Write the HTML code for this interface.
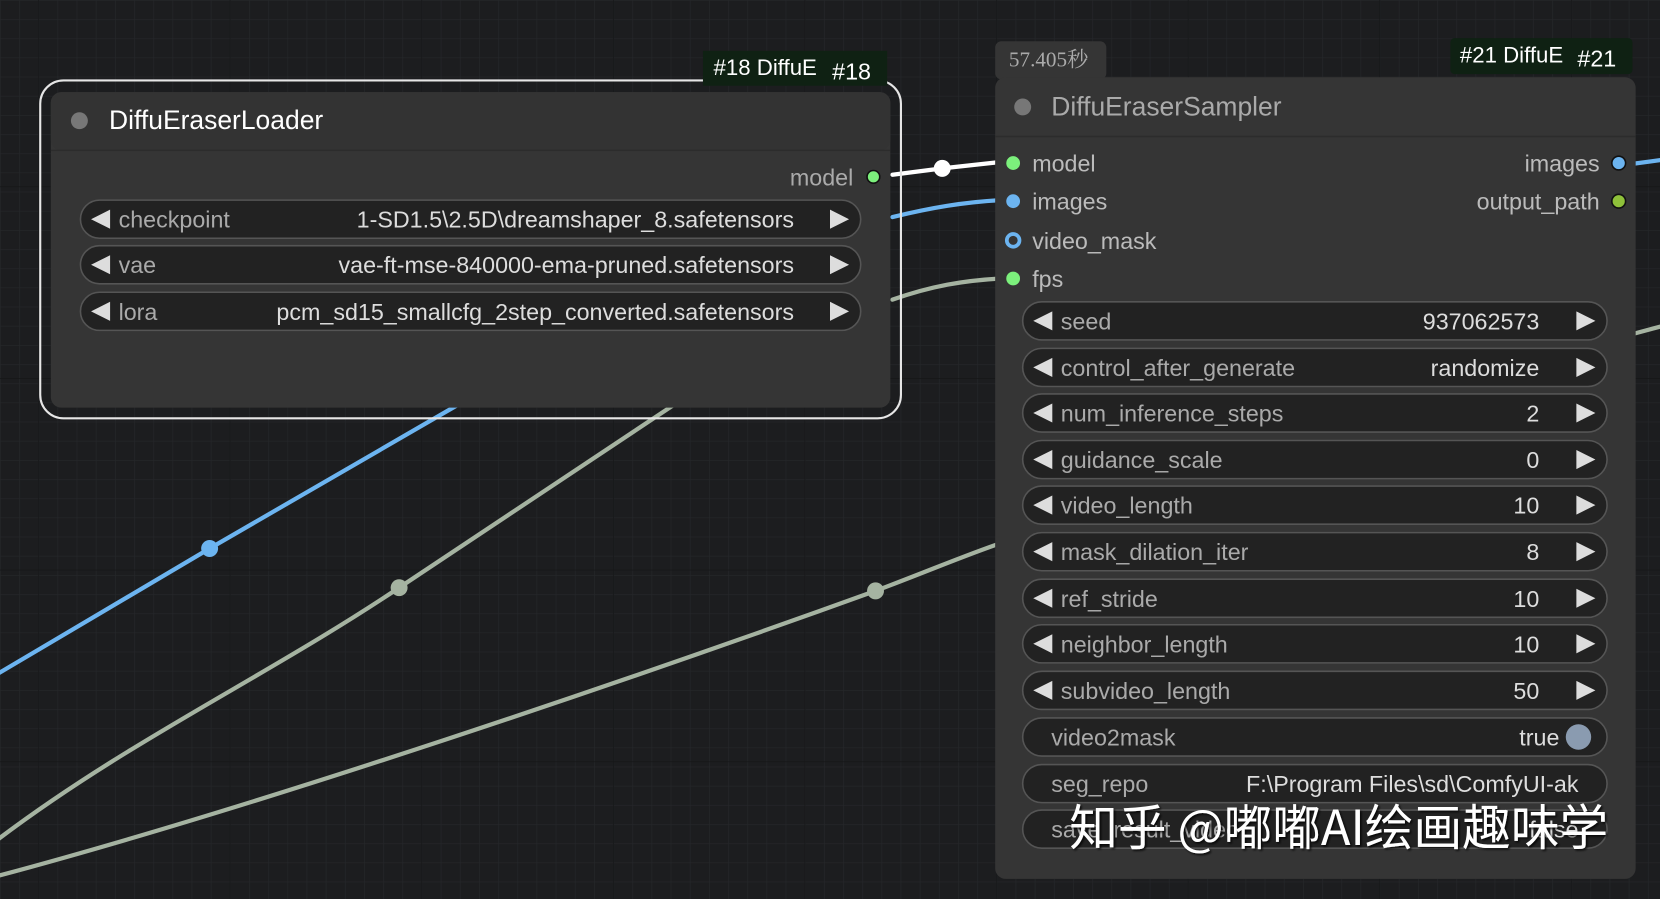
<!DOCTYPE html>
<html><head><meta charset="utf-8"><style>
html,body{margin:0;padding:0;background:#1c1d1f;overflow:hidden}
svg{display:block}
text{font-family:"Liberation Sans","Noto Sans CJK SC",sans-serif}
</style></head><body>
<svg width="1660" height="899" viewBox="0 0 1568 849" preserveAspectRatio="none" xmlns="http://www.w3.org/2000/svg">
<defs>
<pattern id="g" width="18.1" height="18.1" patternUnits="userSpaceOnUse">
<path d="M0 0H18.1M0 0V18.1" stroke="#25272a" stroke-width="1.2" fill="none"/>
</pattern>
<pattern id="G" width="181" height="181" patternUnits="userSpaceOnUse" x="36" y="-5">
<path d="M0 0H181M0 0V181" stroke="#151617" stroke-width="1.4" fill="none"/>
</pattern>
<filter id="sh"><feDropShadow dx="1.5" dy="1.5" stdDeviation="1" flood-color="#000" flood-opacity="0.8"/></filter>
</defs>
<rect width="1568" height="849" fill="#1c1d1f"/>
<rect width="1568" height="849" fill="url(#g)"/>
<rect width="1568" height="849" fill="url(#G)"/>

<g fill="none" stroke-width="4" stroke-linecap="round">
<path d="M-5 638 L198 518 L440 378" stroke="#6cb4f0"/>
<path d="M-5 795 C120 700 250 640 377 555 L640 380" stroke="#a5b3a1"/>
<path d="M-5 828 C250 760 600 640 827 558 C880 538 910 525 945 513" stroke="#a5b3a1"/>
<path d="M843 165 L890 159 L945 153" stroke="#ffffff"/>
<path d="M843 205 C880 196 910 191 945 189" stroke="#6cb4f0"/>
<path d="M843 283 C880 270 910 265 945 263" stroke="#a5b3a1"/>
<path d="M1540 155 L1570 151" stroke="#6cb4f0"/>
<path d="M1540 316 L1570 308" stroke="#a5b3a1"/>
</g>
<circle cx="198" cy="518" r="8" fill="#6cb4f0"/>
<circle cx="377" cy="555" r="8" fill="#a5b3a1"/>
<circle cx="827" cy="558" r="8" fill="#a5b3a1"/>
<circle cx="890" cy="159" r="8" fill="#ffffff"/>

<rect x="38" y="76" width="813" height="319" rx="22" fill="none" stroke="#e6e6e6" stroke-width="2"/>
<rect x="664" y="48" width="174" height="33" fill="#0f2113"/>
<text x="674" y="71" font-size="21" fill="#fff">#18 DiffuE</text>
<text x="786" y="75" font-size="22" fill="#fff">#18</text>
<rect x="48" y="87" width="793" height="298" rx="10" fill="#353535"/>
<rect x="48" y="87" width="793" height="55" rx="10" fill="#333"/>
<line x1="48" y1="142" x2="841" y2="142" stroke="#2c2c2c" stroke-width="1.5"/>
<circle cx="75" cy="114" r="8" fill="#777"/>
<text x="103" y="122" font-size="25" fill="#fff">DiffuEraserLoader</text>
<text x="806" y="175" font-size="22" fill="#aaa" text-anchor="end">model</text>
<circle cx="825" cy="167" r="6" fill="#7cf07c" stroke="#111" stroke-width="1.5"/>
<g font-size="22">
<g transform="translate(0,207)">
<rect x="76" y="-18" width="737" height="36" rx="18" fill="#222" stroke="#555" stroke-width="1.5"/>
<path d="M86 0 L104 -9 L104 9Z" fill="#ddd"/><path d="M802 0 L784 -9 L784 9Z" fill="#ddd"/>
<text x="112" y="8" fill="#aaa">checkpoint</text><text x="750" y="8" fill="#ddd" text-anchor="end">1-SD1.5\2.5D\dreamshaper_8.safetensors</text></g>
<g transform="translate(0,250)">
<rect x="76" y="-18" width="737" height="36" rx="18" fill="#222" stroke="#555" stroke-width="1.5"/>
<path d="M86 0 L104 -9 L104 9Z" fill="#ddd"/><path d="M802 0 L784 -9 L784 9Z" fill="#ddd"/>
<text x="112" y="8" fill="#aaa">vae</text><text x="750" y="8" fill="#ddd" text-anchor="end">vae-ft-mse-840000-ema-pruned.safetensors</text></g>
<g transform="translate(0,294)">
<rect x="76" y="-18" width="737" height="36" rx="18" fill="#222" stroke="#555" stroke-width="1.5"/>
<path d="M86 0 L104 -9 L104 9Z" fill="#ddd"/><path d="M802 0 L784 -9 L784 9Z" fill="#ddd"/>
<text x="112" y="8" fill="#aaa">lora</text><text x="750" y="8" fill="#ddd" text-anchor="end">pcm_sd15_smallcfg_2step_converted.safetensors</text></g>
</g>

<rect x="940" y="39" width="105" height="36" rx="6" fill="#353535"/>
<text x="953" y="63" font-size="20" fill="#aaa" style="font-family:'Liberation Serif','Noto Serif CJK SC',serif">57.405秒</text>
<rect x="1370" y="36" width="172" height="34" rx="4" fill="#0f2113"/>
<text x="1379" y="59" font-size="21" fill="#fff">#21 DiffuE</text>
<text x="1490" y="63" font-size="22" fill="#fff">#21</text>
<rect x="940" y="73" width="605" height="757" rx="10" fill="#353535"/>
<line x1="940" y1="129" x2="1545" y2="129" stroke="#2c2c2c" stroke-width="1.5"/>
<circle cx="966" cy="101" r="8" fill="#777"/>
<text x="993" y="109" font-size="25" fill="#aaa">DiffuEraserSampler</text>
<g font-size="22" fill="#bbb">
<circle cx="957" cy="154" r="6.5" fill="#7cf07c"/><text x="975" y="162">model</text>
<circle cx="957" cy="190" r="6.5" fill="#6cb4f0"/><text x="975" y="198">images</text>
<circle cx="957" cy="227" r="6" fill="none" stroke="#6cb4f0" stroke-width="3.5"/><text x="975" y="235">video_mask</text>
<circle cx="957" cy="263" r="6.5" fill="#7cf07c"/><text x="975" y="271">fps</text>
<text x="1511" y="162" text-anchor="end">images</text><circle cx="1529" cy="154" r="6.5" fill="#6cb4f0" stroke="#111" stroke-width="1.5"/>
<text x="1511" y="198" text-anchor="end">output_path</text><circle cx="1529" cy="190" r="6.5" fill="#8fc13a" stroke="#111" stroke-width="1.5"/>
</g>
<g font-size="22">
<g transform="translate(0,303)"><rect x="966" y="-18" width="552" height="36" rx="18" fill="#222" stroke="#555" stroke-width="1.5"/><path d="M976 0 L994 -9 L994 9Z" fill="#ddd"/><path d="M1507 0 L1489 -9 L1489 9Z" fill="#ddd"/><text x="1002" y="8" fill="#aaa">seed</text><text x="1454" y="8" fill="#ddd" text-anchor="end">937062573</text></g>
<g transform="translate(0,347)"><rect x="966" y="-18" width="552" height="36" rx="18" fill="#222" stroke="#555" stroke-width="1.5"/><path d="M976 0 L994 -9 L994 9Z" fill="#ddd"/><path d="M1507 0 L1489 -9 L1489 9Z" fill="#ddd"/><text x="1002" y="8" fill="#aaa">control_after_generate</text><text x="1454" y="8" fill="#ddd" text-anchor="end">randomize</text></g>
<g transform="translate(0,390)"><rect x="966" y="-18" width="552" height="36" rx="18" fill="#222" stroke="#555" stroke-width="1.5"/><path d="M976 0 L994 -9 L994 9Z" fill="#ddd"/><path d="M1507 0 L1489 -9 L1489 9Z" fill="#ddd"/><text x="1002" y="8" fill="#aaa">num_inference_steps</text><text x="1454" y="8" fill="#ddd" text-anchor="end">2</text></g>
<g transform="translate(0,434)"><rect x="966" y="-18" width="552" height="36" rx="18" fill="#222" stroke="#555" stroke-width="1.5"/><path d="M976 0 L994 -9 L994 9Z" fill="#ddd"/><path d="M1507 0 L1489 -9 L1489 9Z" fill="#ddd"/><text x="1002" y="8" fill="#aaa">guidance_scale</text><text x="1454" y="8" fill="#ddd" text-anchor="end">0</text></g>
<g transform="translate(0,477)"><rect x="966" y="-18" width="552" height="36" rx="18" fill="#222" stroke="#555" stroke-width="1.5"/><path d="M976 0 L994 -9 L994 9Z" fill="#ddd"/><path d="M1507 0 L1489 -9 L1489 9Z" fill="#ddd"/><text x="1002" y="8" fill="#aaa">video_length</text><text x="1454" y="8" fill="#ddd" text-anchor="end">10</text></g>
<g transform="translate(0,521)"><rect x="966" y="-18" width="552" height="36" rx="18" fill="#222" stroke="#555" stroke-width="1.5"/><path d="M976 0 L994 -9 L994 9Z" fill="#ddd"/><path d="M1507 0 L1489 -9 L1489 9Z" fill="#ddd"/><text x="1002" y="8" fill="#aaa">mask_dilation_iter</text><text x="1454" y="8" fill="#ddd" text-anchor="end">8</text></g>
<g transform="translate(0,565)"><rect x="966" y="-18" width="552" height="36" rx="18" fill="#222" stroke="#555" stroke-width="1.5"/><path d="M976 0 L994 -9 L994 9Z" fill="#ddd"/><path d="M1507 0 L1489 -9 L1489 9Z" fill="#ddd"/><text x="1002" y="8" fill="#aaa">ref_stride</text><text x="1454" y="8" fill="#ddd" text-anchor="end">10</text></g>
<g transform="translate(0,608)"><rect x="966" y="-18" width="552" height="36" rx="18" fill="#222" stroke="#555" stroke-width="1.5"/><path d="M976 0 L994 -9 L994 9Z" fill="#ddd"/><path d="M1507 0 L1489 -9 L1489 9Z" fill="#ddd"/><text x="1002" y="8" fill="#aaa">neighbor_length</text><text x="1454" y="8" fill="#ddd" text-anchor="end">10</text></g>
<g transform="translate(0,652)"><rect x="966" y="-18" width="552" height="36" rx="18" fill="#222" stroke="#555" stroke-width="1.5"/><path d="M976 0 L994 -9 L994 9Z" fill="#ddd"/><path d="M1507 0 L1489 -9 L1489 9Z" fill="#ddd"/><text x="1002" y="8" fill="#aaa">subvideo_length</text><text x="1454" y="8" fill="#ddd" text-anchor="end">50</text></g>
<g transform="translate(0,696)"><rect x="966" y="-18" width="552" height="36" rx="18" fill="#222" stroke="#555" stroke-width="1.5"/><text x="993" y="8" fill="#aaa">video2mask</text><text x="1473" y="8" fill="#ddd" text-anchor="end">true</text><circle cx="1491" cy="0" r="12" fill="#8a9bb0"/></g>
<g transform="translate(0,740)"><rect x="966" y="-18" width="552" height="36" rx="18" fill="#222" stroke="#555" stroke-width="1.5"/><text x="993" y="8" fill="#aaa">seg_repo</text><text x="1491" y="8" fill="#ddd" text-anchor="end">F:\Program Files\sd\ComfyUI-ak</text></g>
<g transform="translate(0,783)"><rect x="966" y="-18" width="552" height="36" rx="18" fill="#222" stroke="#555" stroke-width="1.5"/><text x="993" y="8" fill="#aaa">save_result_video</text><text x="1491" y="8" fill="#ddd" text-anchor="end">false</text></g>
</g>
<text x="1010" y="798" font-size="46" fill="#fff" filter="url(#sh)" style="font-family:'Noto Sans CJK SC','Liberation Sans',sans-serif">知乎 @嘟嘟AI绘画趣味学</text>
</svg>
</body></html>
